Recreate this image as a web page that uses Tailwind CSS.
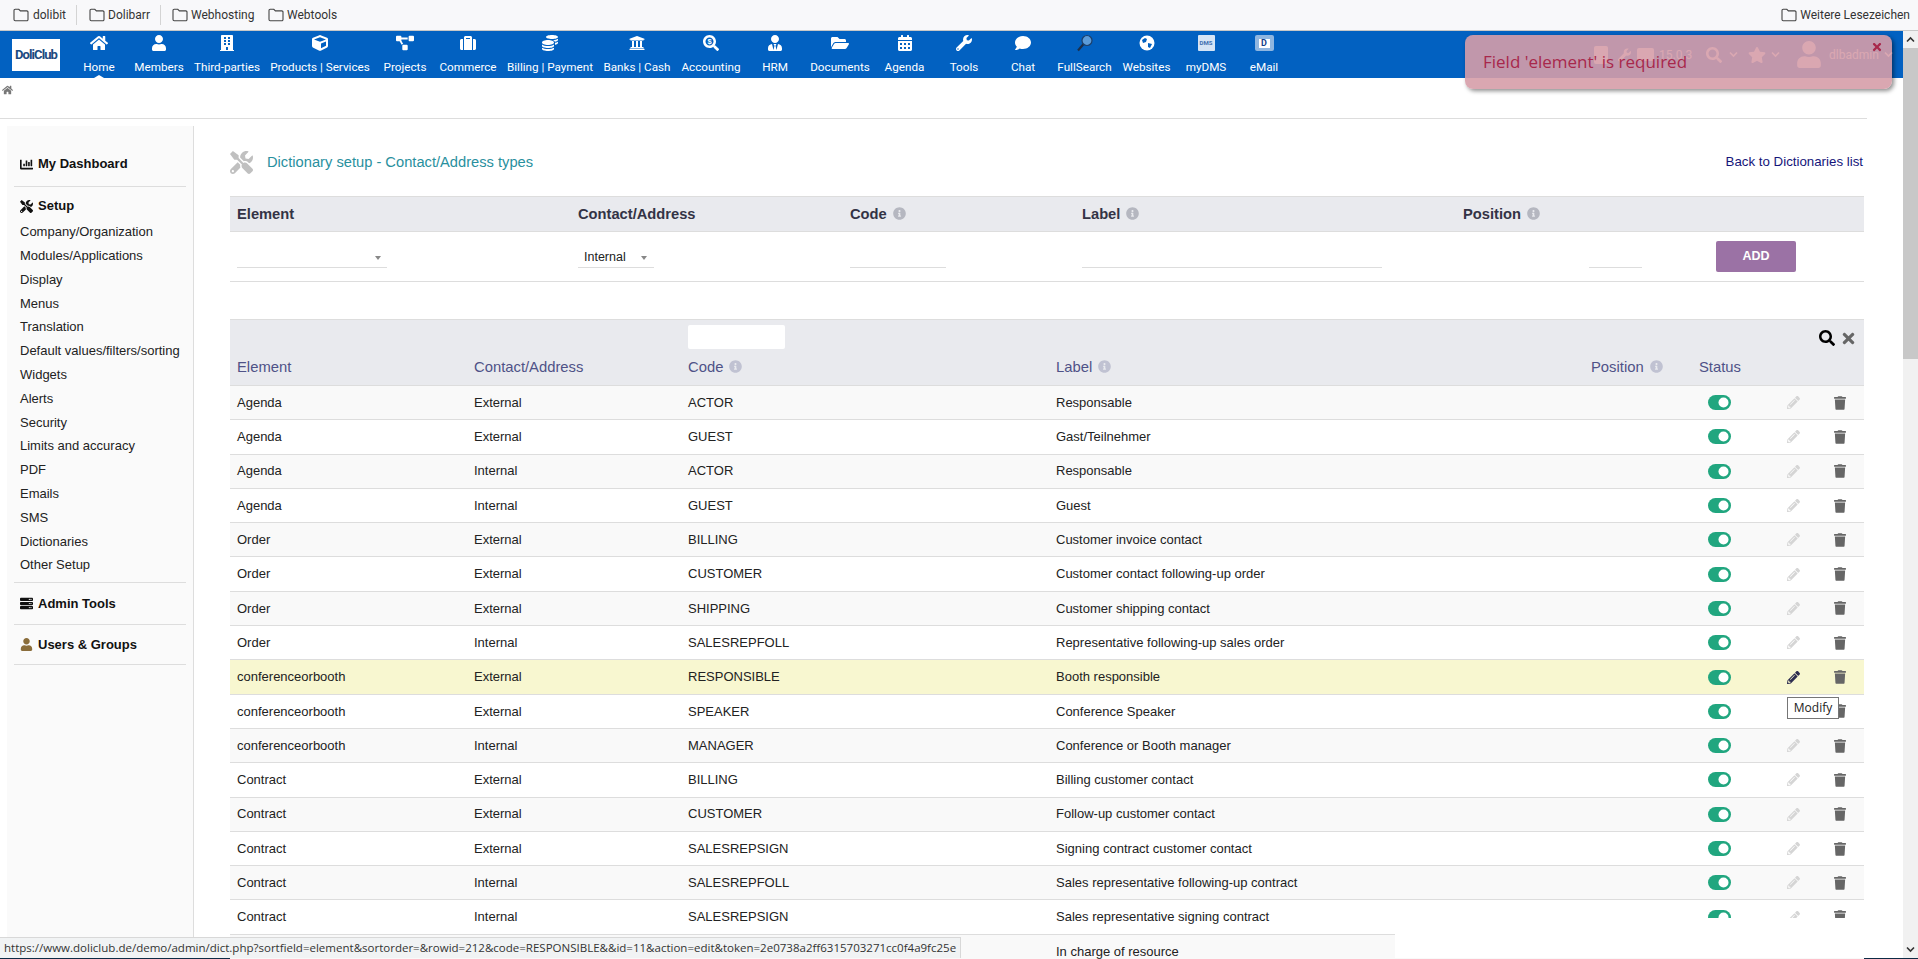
<!DOCTYPE html>
<html lang="en">
  <head>
    <meta charset="UTF-8" />
    <meta name="viewport" content="width=device-width, initial-scale=1.0" />
    <script src="https://cdn.jsdelivr.net/npm/@tailwindcss/browser@4"></script>
    <title>Dictionary setup</title>
  </head>
  <body class="relative w-[1918px] h-[959px] overflow-hidden bg-white font-['Liberation_Sans',Arial,sans-serif] text-[13px] text-[#222]">
    <!-- icon sprites -->
    <svg class="hidden">
      <defs>
        <symbol id="i-home" viewBox="0 0 576 512"><path d="M280.37 148.26L96 300.11V464a16 16 0 0 0 16 16l112.06-.29a16 16 0 0 0 15.92-16V368a16 16 0 0 1 16-16h64a16 16 0 0 1 16 16v95.64a16 16 0 0 0 16 16.05L464 480a16 16 0 0 0 16-16V300L295.67 148.26a12.19 12.19 0 0 0-15.3 0zM571.6 251.47L488 182.56V44.05a12 12 0 0 0-12-12h-56a12 12 0 0 0-12 12v72.61L318.47 43a48 48 0 0 0-61 0L4.34 251.47a12 12 0 0 0-1.6 16.9l25.5 31A12 12 0 0 0 45.15 301l235.22-193.74a12.19 12.19 0 0 1 15.3 0L530.9 301a12 12 0 0 0 16.9-1.6l25.5-31a12 12 0 0 0-1.7-16.93z"/></symbol>
        <symbol id="i-user" viewBox="0 0 448 512"><path d="M224 256c70.7 0 128-57.3 128-128S294.7 0 224 0 96 57.3 96 128s57.3 128 128 128zm89.6 32h-16.7c-22.2 10.2-46.9 16-72.9 16s-50.6-5.8-72.9-16h-16.7C60.2 288 0 348.2 0 422.4V464c0 26.5 21.5 48 48 48h352c26.5 0 48-21.5 48-48v-41.6c0-74.2-60.2-134.4-134.4-134.4z"/></symbol>
        <symbol id="i-trash" viewBox="0 0 448 512"><path d="M432 32H312l-9.4-18.7A24 24 0 0 0 281.1 0H166.8a23.72 23.72 0 0 0-21.4 13.3L136 32H16A16 16 0 0 0 0 48v32a16 16 0 0 0 16 16h416a16 16 0 0 0 16-16V48a16 16 0 0 0-16-16zM53.2 467a48 48 0 0 0 47.9 45h245.8a48 48 0 0 0 47.9-45L416 128H32z"/></symbol>
        <symbol id="i-pencil" viewBox="0 0 512 512"><path d="M497.9 142.1l-46.1 46.1c-4.7 4.7-12.3 4.7-17 0l-111-111c-4.7-4.7-4.7-12.3 0-17l46.1-46.1c18.7-18.7 49.1-18.7 67.9 0l60.1 60.1c18.8 18.7 18.8 49.1 0 67.9zM284.2 99.8L21.6 362.4.4 483.9c-2.9 16.4 11.4 30.6 27.8 27.8l121.5-21.3 262.6-262.6c4.7-4.7 4.7-12.3 0-17l-111-111c-4.8-4.7-12.4-4.7-17.1 0zM124.1 339.9c-5.5-5.5-5.5-14.3 0-19.8l154-154c5.5-5.5 14.3-5.5 19.8 0s5.5 14.3 0 19.8l-154 154c-5.5 5.5-14.3 5.5-19.8 0zM88 424h48v36.3l-64.5 11.3-31.1-31.1L51.7 376H88v48z"/></symbol>
        <symbol id="i-search" viewBox="0 0 512 512"><path d="M505 442.7L405.3 343c-4.5-4.5-10.6-7-17-7H372c27.6-35.3 44-79.7 44-128C416 93.1 322.9 0 208 0S0 93.1 0 208s93.1 208 208 208c48.3 0 92.7-16.4 128-44v16.3c0 6.4 2.5 12.5 7 17l99.7 99.7c9.4 9.4 24.6 9.4 33.9 0l28.3-28.3c9.4-9.4 9.4-24.6.1-34zM208 336c-70.7 0-128-57.2-128-128 0-70.7 57.2-128 128-128 70.7 0 128 57.2 128 128 0 70.7-57.2 128-128 128z"/></symbol>
        <symbol id="i-times" viewBox="0 0 352 512"><path d="M242.72 256l100.07-100.07c12.28-12.28 12.28-32.19 0-44.48l-22.24-22.24c-12.28-12.28-32.19-12.28-44.48 0L176 189.28 75.93 89.21c-12.28-12.28-32.19-12.28-44.48 0L9.21 111.45c-12.28 12.28-12.28 32.19 0 44.48L109.28 256 9.21 356.07c-12.28 12.28-12.28 32.19 0 44.48l22.24 22.24c12.28 12.28 32.2 12.28 44.48 0L176 322.72l100.07 100.07c12.28 12.28 32.2 12.28 44.48 0l22.24-22.24c12.28-12.28 12.28-32.19 0-44.48L242.72 256z"/></symbol>
        <symbol id="i-info" viewBox="0 0 512 512"><path d="M256 8C119.043 8 8 119.083 8 256c0 136.997 111.043 248 248 248s248-111.003 248-248C504 119.083 392.957 8 256 8zm0 110c23.196 0 42 18.804 42 42s-18.804 42-42 42-42-18.804-42-42 18.804-42 42-42zm56 254c0 6.627-5.373 12-12 12h-88c-6.627 0-12-5.373-12-12v-24c0-6.627 5.373-12 12-12h12v-64h-12c-6.627 0-12-5.373-12-12v-24c0-6.627 5.373-12 12-12h64c6.627 0 12 5.373 12 12v100h12c6.627 0 12 5.373 12 12v24z"/></symbol>
        <symbol id="i-tools" viewBox="0 0 512 512"><path d="M501.1 395.7L384 278.6c-23.1-23.1-57.6-27.6-85.4-13.9L192 158.1V96L64 0 0 64l96 128h62.1l106.6 106.6c-13.6 27.8-9.2 62.3 13.9 85.4l117.1 117.1c14.6 14.6 38.2 14.6 52.7 0l52.7-52.7c14.5-14.6 14.5-38.2 0-52.7zM331.7 225c28.3 0 54.9 11 74.9 31l19.4 19.4c15.8-6.9 30.8-16.5 43.8-29.5 37.1-37.1 49.7-89.3 37.9-136.7-2.2-9-13.5-12.1-20.1-5.5l-74.4 74.4-67.9-11.3L334 98.9l74.4-74.4c6.6-6.6 3.4-17.9-5.7-20.2-47.4-11.7-99.6.9-136.6 37.9-28.5 28.5-41.9 66.1-41.2 103.6l82.1 82.1c8.1-1.9 16.5-2.9 24.7-2.9zm-103.9 82l-56.7-56.7L18.7 402.8c-25 25-25 65.5 0 90.5s65.5 25 90.5 0l123.6-123.6c-7.6-19.9-9.9-41.6-5-62.7zM64 472c-13.2 0-24-10.8-24-24 0-13.3 10.7-24 24-24s24 10.7 24 24c0 13.2-10.7 24-24 24z"/></symbol>
        <symbol id="i-wrench" viewBox="0 0 512 512"><path d="M507.73 109.1c-2.24-9.03-13.54-12.09-20.12-5.51l-74.36 74.36-67.88-11.31-11.31-67.88 74.36-74.36c6.62-6.62 3.43-17.9-5.66-20.16-47.38-11.74-99.55.91-136.58 37.93-39.64 39.64-50.55 97.1-34.05 147.2L18.74 402.76c-24.99 24.99-24.99 65.51 0 90.5 24.99 24.99 65.51 24.99 90.5 0l213.21-213.21c50.12 16.71 107.47 5.68 147.37-34.22 37.07-37.07 49.7-89.32 37.91-136.73zM64 472c-13.25 0-24-10.75-24-24 0-13.26 10.75-24 24-24s24 10.74 24 24c0 13.25-10.75 24-24 24z"/></symbol>
        <symbol id="i-star" viewBox="0 0 576 512"><path d="M259.3 17.8L194 150.2 47.9 171.5c-26.2 3.8-36.7 36.1-17.7 54.6l105.7 103-25 145.5c-4.5 26.3 23.2 46 46.4 33.7L288 439.6l130.7 68.7c23.2 12.2 50.9-7.4 46.4-33.7l-25-145.5 105.7-103c19-18.5 8.5-50.8-17.7-54.6L382 150.2 316.7 17.8c-11.7-23.6-45.6-23.9-57.4 0z"/></symbol>
        <symbol id="i-chevron" viewBox="0 0 9 7"><path d="M1 1.5l3.5 3.5 3.5-3.5" fill="none" stroke="currentColor" stroke-width="1.6"/></symbol>
        <symbol id="i-folder" viewBox="0 0 16 14"><path d="M1 2.5a1.2 1.2 0 0 1 1.2-1.2h3.6l1.6 1.6h6.4a1.2 1.2 0 0 1 1.2 1.2v7.4a1.2 1.2 0 0 1-1.2 1.2H2.2A1.2 1.2 0 0 1 1 11.5z" fill="none" stroke="#444" stroke-width="1.1"/></symbol>
        <symbol id="i-toggle" viewBox="0 0 23 15"><rect width="23" height="15" rx="7.5" fill="#21a67f"/><circle cx="15.5" cy="7.5" r="5" fill="#fff"/></symbol>
      </defs>
    </svg>

    <!-- browser bookmarks bar -->
    <div class="flex items-center h-[31px] bg-[#f8f8fa] border-b border-[#c8c8c8] text-[12px] text-[#333] font-['Roboto',sans-serif]">
      <svg class="w-[16px] h-[14px] ml-[13px]"><use href="#i-folder" /></svg>
      <span class="ml-[4px] w-[43px]">dolibit</span>
      <span class="w-px h-[20px] bg-[#d4d4d4]"></span>
      <svg class="w-[16px] h-[14px] ml-[12px]"><use href="#i-folder" /></svg>
      <span class="ml-[3px] w-[52px]">Dolibarr</span>
      <span class="w-px h-[20px] bg-[#d4d4d4]"></span>
      <svg class="w-[16px] h-[14px] ml-[11px]"><use href="#i-folder" /></svg>
      <span class="ml-[3px] w-[77px]">Webhosting</span>
      <svg class="w-[16px] h-[14px]"><use href="#i-folder" /></svg>
      <span class="ml-[3px]">Webtools</span>
      <svg class="w-[16px] h-[14px] ml-auto"><use href="#i-folder" /></svg>
      <span class="ml-[3px] mr-[8px]">Weitere Lesezeichen</span>
    </div>

    <div class="flex h-[927px]">
      <div class="w-[1903px] flex flex-col">
        <!-- top menu -->
        <nav class="flex h-[47px] bg-[#0261c1] text-white font-['Roboto',sans-serif] text-[11.7px] shrink-0">
          <div class="w-[70px] flex items-center pl-[12px]">
            <div class="w-[48px] h-[32px] bg-white flex items-center justify-center text-[#1c4a80] font-bold text-[13px] tracking-[-0.9px] font-['Liberation_Sans_Narrow','Roboto',sans-serif]">DoliClub</div>
          </div>
          <a class="relative w-[58px] flex flex-col items-center pt-[4px]"><svg class="w-[18px] h-[16px] fill-white"><use href="#i-home" /></svg><span class="mt-[8px]">Home</span><span class="absolute bottom-0 border-x-[5px] border-x-transparent border-b-[3px] border-b-white"></span></a>
          <a class="w-[62px] flex flex-col items-center pt-[4px]"><svg class="w-[14px] h-[16px] fill-white"><use href="#i-user" /></svg><span class="mt-[8px]">Members</span></a>
          <a class="w-[74px] flex flex-col items-center pt-[4px]">
            <svg class="w-[14px] h-[16px] fill-white" viewBox="0 0 448 512"><path d="M436 480h-20V24c0-13.255-10.745-24-24-24H56C42.745 0 32 10.745 32 24v456H12c-6.627 0-12 5.373-12 12v20h448v-20c0-6.627-5.373-12-12-12zM128 76c0-6.627 5.373-12 12-12h40c6.627 0 12 5.373 12 12v40c0 6.627-5.373 12-12 12h-40c-6.627 0-12-5.373-12-12V76zm0 96c0-6.627 5.373-12 12-12h40c6.627 0 12 5.373 12 12v40c0 6.627-5.373 12-12 12h-40c-6.627 0-12-5.373-12-12v-40zm52 148h-40c-6.627 0-12-5.373-12-12v-40c0-6.627 5.373-12 12-12h40c6.627 0 12 5.373 12 12v40c0 6.627-5.373 12-12 12zm76 160h-64v-84c0-6.627 5.373-12 12-12h40c6.627 0 12 5.373 12 12v84zm64-172c0 6.627-5.373 12-12 12h-40c-6.627 0-12-5.373-12-12v-40c0-6.627 5.373-12 12-12h40c6.627 0 12 5.373 12 12v40zm0-96c0 6.627-5.373 12-12 12h-40c-6.627 0-12-5.373-12-12v-40c0-6.627 5.373-12 12-12h40c6.627 0 12 5.373 12 12v40zm0-96c0 6.627-5.373 12-12 12h-40c-6.627 0-12-5.373-12-12V76c0-6.627 5.373-12 12-12h40c6.627 0 12 5.373 12 12v40z"/></svg>
            <span class="mt-[8px]">Third-parties</span>
          </a>
          <a class="w-[112px] flex flex-col items-center pt-[4px]">
            <svg class="w-[16px] h-[16px] fill-white" viewBox="0 0 512 512"><path d="M239.1 6.3l-208 78c-18.7 7-31.1 25-31.1 45v225.1c0 18.2 10.3 34.8 26.5 42.9l208 104c13.5 6.8 29.4 6.8 42.9 0l208-104c16.3-8.1 26.5-24.8 26.5-42.9V129.3c0-20-12.4-37.9-31.1-44.9l-208-78C262 2.2 250 2.2 239.1 6.3zM256 68.4l192 72v1.1l-192 78-192-78v-1.1l192-72zm32 356V275.5l160-65v133.9l-160 80z"/></svg>
            <span class="mt-[8px]">Products | Services</span>
          </a>
          <a class="w-[58px] flex flex-col items-center pt-[4px]">
            <svg class="w-[18px] h-[16px] fill-white" viewBox="0 0 640 512"><path d="M384 320H256c-17.67 0-32 14.33-32 32v128c0 17.67 14.33 32 32 32h128c17.67 0 32-14.33 32-32V352c0-17.67-14.33-32-32-32zM192 32c0-17.67-14.33-32-32-32H32C14.33 0 0 14.33 0 32v128c0 17.67 14.33 32 32 32h95.72l73.16 128.04C211.98 300.98 232.4 288 256 288h.28L192 175.51V128h224V64H192V32zM608 0H480c-17.67 0-32 14.33-32 32v128c0 17.67 14.33 32 32 32h128c17.67 0 32-14.33 32-32V32c0-17.67-14.33-32-32-32z"/></svg>
            <span class="mt-[8px]">Projects</span>
          </a>
          <a class="w-[68px] flex flex-col items-center pt-[4px]">
            <svg class="w-[16px] h-[16px] fill-white" viewBox="0 0 512 512"><path d="M128 480h256V80c0-26.5-21.5-48-48-48H176c-26.5 0-48 21.5-48 48v400zm64-384h128v32H192V96zm320 80v256c0 26.5-21.5 48-48 48h-48V128h48c26.5 0 48 21.5 48 48zM96 480H48c-26.5 0-48-21.5-48-48V176c0-26.5 21.5-48 48-48h48v352z"/></svg>
            <span class="mt-[8px]">Commerce</span>
          </a>
          <a class="w-[96px] flex flex-col items-center pt-[4px]">
            <svg class="w-[16px] h-[16px] fill-white" viewBox="0 0 512 512"><path d="M0 405.3V448c0 35.3 86 64 192 64s192-28.7 192-64v-42.7C342.7 434.4 267.2 448 192 448S41.3 434.4 0 405.3zM320 128c106 0 192-28.7 192-64S426 0 320 0 128 28.7 128 64s86 64 192 64zM0 300.4V352c0 35.3 86 64 192 64s192-28.7 192-64v-51.6c-41.3 34-116.9 51.6-192 51.6S41.3 334.4 0 300.4zm416 11c57.3-11.1 96-31.7 96-55.4v-42.7c-23.2 16.4-57.3 27.6-96 34.5v63.6zM192 160C86 160 0 195.8 0 240s86 80 192 80 192-35.8 192-80-86-80-192-80zm219.3 56.3c60-10.8 100.7-32 100.7-56.3v-42.7c-35.5 25.1-96.5 38.6-160.7 41.8 29.5 14.3 51.2 33.5 60 57.2z"/></svg>
            <span class="mt-[8px]">Billing | Payment</span>
          </a>
          <a class="w-[78px] flex flex-col items-center pt-[4px]">
            <svg class="w-[16px] h-[16px] fill-white" viewBox="0 0 512 512"><path d="M496 128v16a8 8 0 0 1-8 8h-24v12c0 6.627-5.373 12-12 12H60c-6.627 0-12-5.373-12-12v-12H24a8 8 0 0 1-8-8v-16a8 8 0 0 1 4.941-7.392l232-88a7.996 7.996 0 0 1 6.118 0l232 88A8 8 0 0 1 496 128zm-24 304H40c-13.255 0-24 10.745-24 24v16a8 8 0 0 0 8 8h464a8 8 0 0 0 8-8v-16c0-13.255-10.745-24-24-24zM96 192v192H60c-6.627 0-12 5.373-12 12v20h416v-20c0-6.627-5.373-12-12-12h-36V192h-64v192h-64V192h-64v192h-64V192H96z"/></svg>
            <span class="mt-[8px]">Banks | Cash</span>
          </a>
          <a class="w-[70px] flex flex-col items-center pt-[4px]">
            <svg class="w-[16px] h-[16px] fill-white" viewBox="0 0 512 512"><use href="#i-search" /><text x="208" y="300" text-anchor="middle" font-size="240" font-weight="700" font-family="Liberation Sans">$</text></svg>
            <span class="mt-[8px]">Accounting</span>
          </a>
          <a class="w-[58px] flex flex-col items-center pt-[4px]">
            <svg class="w-[14px] h-[16px] fill-white" viewBox="0 0 448 512"><path d="M224 256c70.7 0 128-57.3 128-128S294.7 0 224 0 96 57.3 96 128s57.3 128 128 128zm95.8 32.6L272 480l-32-136 32-56h-96l32 56-32 136-47.8-191.4C56.9 292 0 350.3 0 422.4V464c0 26.5 21.5 48 48 48h352c26.5 0 48-21.5 48-48v-41.6c0-72.1-56.9-130.4-128.2-133.8z"/></svg>
            <span class="mt-[8px]">HRM</span>
          </a>
          <a class="w-[72px] flex flex-col items-center pt-[4px]">
            <svg class="w-[18px] h-[16px] fill-white" viewBox="0 0 576 512"><path d="M572.694 292.093L500.27 416.248A63.997 63.997 0 0 1 444.989 448H45.025c-18.523 0-30.064-20.093-20.731-36.093l72.424-124.155A64 64 0 0 1 152 256h399.964c18.523 0 30.064 20.093 20.73 36.093zM152 224h328v-48c0-26.51-21.49-48-48-48H272l-64-64H48C21.49 64 0 85.49 0 112v278.046l69.077-118.418C86.214 242.25 117.989 224 152 224z"/></svg>
            <span class="mt-[8px]">Documents</span>
          </a>
          <a class="w-[57px] flex flex-col items-center pt-[4px]">
            <svg class="w-[14px] h-[16px] fill-white" viewBox="0 0 448 512"><path d="M0 464c0 26.5 21.5 48 48 48h352c26.5 0 48-21.5 48-48V192H0v272zm320-196c0-6.6 5.4-12 12-12h40c6.6 0 12 5.4 12 12v40c0 6.6-5.4 12-12 12h-40c-6.6 0-12-5.4-12-12v-40zm0 128c0-6.6 5.4-12 12-12h40c6.6 0 12 5.4 12 12v40c0 6.6-5.4 12-12 12h-40c-6.6 0-12-5.4-12-12v-40zM192 268c0-6.6 5.4-12 12-12h40c6.6 0 12 5.4 12 12v40c0 6.6-5.4 12-12 12h-40c-6.6 0-12-5.4-12-12v-40zm0 128c0-6.6 5.4-12 12-12h40c6.6 0 12 5.4 12 12v40c0 6.6-5.4 12-12 12h-40c-6.6 0-12-5.4-12-12v-40zM64 268c0-6.6 5.4-12 12-12h40c6.6 0 12 5.4 12 12v40c0 6.6-5.4 12-12 12H76c-6.6 0-12-5.4-12-12v-40zm0 128c0-6.6 5.4-12 12-12h40c6.6 0 12 5.4 12 12v40c0 6.6-5.4 12-12 12H76c-6.6 0-12-5.4-12-12v-40zM400 64h-48V16c0-8.8-7.2-16-16-16h-32c-8.8 0-16 7.2-16 16v48H160V16c0-8.8-7.2-16-16-16h-32c-8.8 0-16 7.2-16 16v48H48C21.5 64 0 85.5 0 112v48h448v-48c0-26.5-21.5-48-48-48z"/></svg>
            <span class="mt-[8px]">Agenda</span>
          </a>
          <a class="w-[62px] flex flex-col items-center pt-[4px]"><svg class="w-[16px] h-[16px] fill-white"><use href="#i-wrench" /></svg><span class="mt-[8px]">Tools</span></a>
          <a class="w-[56px] flex flex-col items-center pt-[4px]">
            <svg class="w-[16px] h-[16px] fill-white" viewBox="0 0 512 512"><path d="M256 32C114.6 32 0 125.1 0 240c0 49.6 21.4 95 57 130.7C44.5 421.1 2.7 466 2.2 466.5c-2.2 2.3-2.8 5.7-1.5 8.7S4.8 480 8 480c66.3 0 116-31.8 140.6-51.4 32.7 12.3 69 19.4 107.4 19.4 141.4 0 256-93.1 256-208S397.4 32 256 32z"/></svg>
            <span class="mt-[8px]">Chat</span>
          </a>
          <a class="w-[67px] flex flex-col items-center pt-[4px]">
            <svg class="w-[18px] h-[18px] -mt-[1px] -mb-[1px]" viewBox="0 0 18 18"><line x1="2" y1="16.5" x2="8" y2="9.5" stroke="#1c2f4a" stroke-width="2.2" /><circle cx="11" cy="6.5" r="5" fill="#5b9bd8" stroke="#1c3f6a" stroke-width="1.2" /></svg>
            <span class="mt-[8px]">FullSearch</span>
          </a>
          <a class="w-[57px] flex flex-col items-center pt-[4px]">
            <svg class="w-[16px] h-[16px]" viewBox="0 0 16 16"><circle cx="8" cy="8" r="7.5" fill="#fff" /><path d="M3 5l3-2 2 1-1 3-3 1zM9 8l4 1-2 4-2-1z" fill="#0261c1" /></svg>
            <span class="mt-[8px]">Websites</span>
          </a>
          <a class="w-[62px] flex flex-col items-center pt-[4px]">
            <div class="w-[17px] h-[16px] bg-[#d5e4f5] rounded-[1px] flex items-center justify-center text-[6px] leading-none text-[#3d6fb0] font-bold">DMS</div>
            <span class="mt-[8px]">myDMS</span>
          </a>
          <a class="w-[54px] flex flex-col items-center pt-[4px]">
            <div class="w-[19px] h-[16px] bg-[#8fb6e0] rounded-[2px] flex items-center justify-center text-[9px] leading-none text-[#12408a] font-bold"><span class="bg-white w-[11px] text-center">D</span></div>
            <span class="mt-[8px]">eMail</span>
          </a>
          <!-- right side of the menu, mostly under the error message -->
          <div class="ml-auto flex items-center pr-[10px] text-[12px] text-white">
            <div class="w-[14px] h-[18px] bg-white rounded-[2px]"></div>
            <svg class="w-[13px] h-[14px] fill-white ml-[10px]"><use href="#i-wrench" /></svg>
            <div class="w-[17px] h-[13px] bg-white rounded-[2px] ml-[6px]"></div>
            <span class="ml-[5px] w-[30px]">15.0.3</span>
            <svg class="w-[16px] h-[16px] fill-white ml-[17px]"><use href="#i-search" /></svg>
            <svg class="w-[9px] h-[7px] ml-[7px]"><use href="#i-chevron" /></svg>
            <svg class="w-[18px] h-[16px] fill-white ml-[10px]"><use href="#i-star" /></svg>
            <svg class="w-[9px] h-[7px] ml-[5px]"><use href="#i-chevron" /></svg>
            <svg class="w-[24px] h-[27px] fill-white ml-[17px]"><use href="#i-user" /></svg>
            <span class="ml-[8px] w-[50px]">dlbadmin</span>
            <svg class="w-[9px] h-[7px] ml-[5px]"><use href="#i-chevron" /></svg>
          </div>
        </nav>

        <!-- breadcrumb strip -->
        <div class="h-[41px] shrink-0 mr-[36px] border-b border-[#ddd] pt-[7px] pl-[2px]">
          <svg class="w-[11px] h-[10px] fill-[#777]"><use href="#i-home" /></svg>
        </div>

        <div class="flex flex-1 min-h-0 pt-[7px]">
          <!-- left menu -->
          <aside class="w-[187px] ml-[7px] bg-[#fafafa] border-r border-[#ddd] shrink-0 px-[7px] pt-[28px] text-[#222]">
            <div class="flex items-center h-[20px] pl-[6px] font-bold text-[13px] text-[#111]"><svg class="w-[13px] h-[13px] mr-[5px] fill-[#111]" viewBox="0 0 512 512"><path d="M332.8 320h38.4c6.4 0 12.8-6.4 12.8-12.8V172.8c0-6.4-6.4-12.8-12.8-12.8h-38.4c-6.4 0-12.8 6.4-12.8 12.8v134.4c0 6.4 6.4 12.8 12.8 12.8zm96 0h38.4c6.4 0 12.8-6.4 12.8-12.8V76.8c0-6.4-6.4-12.8-12.8-12.8h-38.4c-6.4 0-12.8 6.4-12.8 12.8v230.4c0 6.4 6.4 12.8 12.8 12.8zm-288 0h38.4c6.4 0 12.8-6.4 12.8-12.8v-70.4c0-6.4-6.4-12.8-12.8-12.8h-38.4c-6.4 0-12.8 6.4-12.8 12.8v70.4c0 6.4 6.4 12.8 12.8 12.8zm96 0h38.4c6.4 0 12.8-6.4 12.8-12.8V108.8c0-6.4-6.4-12.8-12.8-12.8h-38.4c-6.4 0-12.8 6.4-12.8 12.8v198.4c0 6.4 6.4 12.8 12.8 12.8zM496 384H64V80c0-8.84-7.16-16-16-16H16C7.16 64 0 71.16 0 80v336c0 17.67 14.33 32 32 32h464c8.84 0 16-7.16 16-16v-32c0-8.84-7.16-16-16-16z"/></svg>My Dashboard</div>
            <div class="mt-[12px] border-b border-[#ddd]"></div>
            <div class="flex items-center h-[24px] mt-[7px] pl-[6px] font-bold text-[13px] text-[#111]"><svg class="w-[13px] h-[13px] mr-[5px] fill-[#111]"><use href="#i-tools" /></svg>Setup</div>
            <div class="pl-[6px] mt-[2px] [&>div]:h-[23.8px] [&>div]:flex [&>div]:items-center">
              <div>Company/Organization</div>
              <div>Modules/Applications</div>
              <div>Display</div>
              <div>Menus</div>
              <div>Translation</div>
              <div>Default values/filters/sorting</div>
              <div>Widgets</div>
              <div>Alerts</div>
              <div>Security</div>
              <div>Limits and accuracy</div>
              <div>PDF</div>
              <div>Emails</div>
              <div>SMS</div>
              <div>Dictionaries</div>
              <div>Other Setup</div>
            </div>
            <div class="mt-[5px] border-b border-[#ddd]"></div>
            <div class="flex items-center h-[20px] mt-[11px] pl-[6px] font-bold text-[13px] text-[#111]">
              <svg class="w-[13px] h-[13px] mr-[5px] fill-[#111]" viewBox="0 0 512 512"><path d="M480 160H32c-17.673 0-32-14.327-32-32V64c0-17.673 14.327-32 32-32h448c17.673 0 32 14.327 32 32v64c0 17.673-14.327 32-32 32zm-48-88c-13.255 0-24 10.745-24 24s10.745 24 24 24 24-10.745 24-24-10.745-24-24-24zm-64 0c-13.255 0-24 10.745-24 24s10.745 24 24 24 24-10.745 24-24-10.745-24-24-24zm112 248H32c-17.673 0-32-14.327-32-32v-64c0-17.673 14.327-32 32-32h448c17.673 0 32 14.327 32 32v64c0 17.673-14.327 32-32 32zm-48-88c-13.255 0-24 10.745-24 24s10.745 24 24 24 24-10.745 24-24-10.745-24-24-24zm-64 0c-13.255 0-24 10.745-24 24s10.745 24 24 24 24-10.745 24-24-10.745-24-24-24zm112 248H32c-17.673 0-32-14.327-32-32v-64c0-17.673 14.327-32 32-32h448c17.673 0 32 14.327 32 32v64c0 17.673-14.327 32-32 32zm-48-88c-13.255 0-24 10.745-24 24s10.745 24 24 24 24-10.745 24-24-10.745-24-24-24zm-64 0c-13.255 0-24 10.745-24 24s10.745 24 24 24 24-10.745 24-24-10.745-24-24-24z"/></svg>
              Admin Tools
            </div>
            <div class="mt-[10px] border-b border-[#ddd]"></div>
            <div class="flex items-center h-[20px] mt-[10px] pl-[6px] font-bold text-[13px] text-[#111]"><svg class="w-[13px] h-[13px] mr-[5px] fill-[#8a6d3b]"><use href="#i-user" /></svg>Users &amp; Groups</div>
            <div class="mt-[9px] border-b border-[#ddd]"></div>
          </aside>

          <!-- page content -->
          <main class="ml-[36px] w-[1634px] shrink-0">
            <div class="flex items-center h-[24px] mt-[24px]">
              <svg class="w-[23px] h-[23px] fill-[#c0c0c0]"><use href="#i-tools" /></svg>
              <h1 class="ml-[14px] text-[14.7px] text-[#29909e]">Dictionary setup - Contact/Address types</h1>
              <a class="ml-auto mr-[1px] text-[13.3px] text-[#15157a]">Back to Dictionaries list</a>
            </div>

            <!-- add form -->
            <div class="mt-[22px] grid grid-cols-[348px_272px_232px_381px_401px] h-[36px] items-center bg-[#e9eaee] border-y border-[#ddd] font-bold text-[14.7px] text-[#333345]">
              <div class="pl-[7px]">Element</div>
              <div>Contact/Address</div>
              <div class="flex items-center">Code<svg class="w-[13px] h-[13px] ml-[6px] fill-[#b5b7c0]"><use href="#i-info" /></svg></div>
              <div class="flex items-center">Label<svg class="w-[13px] h-[13px] ml-[6px] fill-[#b5b7c0]"><use href="#i-info" /></svg></div>
              <div class="flex items-center">Position<svg class="w-[13px] h-[13px] ml-[6px] fill-[#b5b7c0]"><use href="#i-info" /></svg></div>
            </div>
            <div class="relative grid grid-cols-[348px_272px_232px_507px_127px_148px] h-[50px] border-b border-[#ddd]">
              <div class="pl-[7px] pt-[17px]">
                <div class="relative w-[150px] h-[19px] border-b border-[#ddd]"><span class="absolute right-[6px] top-[7px] border-x-[3px] border-x-transparent border-t-[4px] border-t-[#888]"></span></div>
              </div>
              <div class="pt-[17px]">
                <div class="relative w-[76px] h-[19px] border-b border-[#ddd] pl-[6px] leading-[16px] text-[12.5px]">Internal<span class="absolute right-[7px] top-[7px] border-x-[3px] border-x-transparent border-t-[4px] border-t-[#888]"></span></div>
              </div>
              <div class="pt-[17px]"><div class="w-[96px] h-[19px] border-b border-[#ddd]"></div></div>
              <div class="pt-[17px]"><div class="w-[300px] h-[19px] border-b border-[#ddd]"></div></div>
              <div class="pt-[17px]"><div class="w-[53px] h-[19px] border-b border-[#ddd]"></div></div>
              <div class="pt-[9px]">
                <button class="w-[80px] h-[31px] rounded-[2px] bg-[#9b72a5] text-white font-bold text-[12.5px]">ADD</button>
              </div>
            </div>

            <!-- dictionary list -->
            <div class="mt-[37px] h-[67px] bg-[#e9eaee] border-y border-[#ddd] relative grid grid-cols-[244px_214px_368px_535px_108px_165px] items-end pb-[7px] text-[14.8px] text-[#4f5287]">
              <div class="pl-[7px]">Element</div>
              <div>Contact/Address</div>
              <div class="flex items-center">Code<svg class="w-[13px] h-[13px] ml-[6px] fill-[#c0c2d2]"><use href="#i-info" /></svg></div>
              <div class="flex items-center">Label<svg class="w-[13px] h-[13px] ml-[6px] fill-[#c0c2d2]"><use href="#i-info" /></svg></div>
              <div class="flex items-center">Position<svg class="w-[13px] h-[13px] ml-[6px] fill-[#c0c2d2]"><use href="#i-info" /></svg></div>
              <div>Status</div>
              <div class="absolute left-[458px] top-[5px] w-[97px] h-[24px] bg-white rounded-[2px]"></div>
              <svg class="absolute left-[1589px] top-[10px] w-[16px] h-[16px] fill-black"><use href="#i-search" /></svg>
              <svg class="absolute left-[1612px] top-[10px] w-[13px] h-[17px] fill-[#666]"><use href="#i-times" /></svg>
            </div>
            <div class="grid grid-cols-[244px_214px_368px_535px_108px_72px_44px_49px] auto-rows-[34.3px] text-[#222]">
              <div class="col-span-8 grid grid-cols-subgrid items-center border-b border-[#ddd] bg-[#f9f9f9]"><div class="pl-[7px]">Agenda</div><div>External</div><div>ACTOR</div><div>Responsable</div><div></div><svg class="w-[23px] h-[15px] ml-[9px]"><use href="#i-toggle" /></svg><svg class="w-[13px] h-[13px] mx-auto fill-[#d5d5d5]"><use href="#i-pencil" /></svg><svg class="w-[12px] h-[14px] mx-auto fill-[#666]"><use href="#i-trash" /></svg></div>
              <div class="col-span-8 grid grid-cols-subgrid items-center border-b border-[#ddd]"><div class="pl-[7px]">Agenda</div><div>External</div><div>GUEST</div><div>Gast/Teilnehmer</div><div></div><svg class="w-[23px] h-[15px] ml-[9px]"><use href="#i-toggle" /></svg><svg class="w-[13px] h-[13px] mx-auto fill-[#d5d5d5]"><use href="#i-pencil" /></svg><svg class="w-[12px] h-[14px] mx-auto fill-[#666]"><use href="#i-trash" /></svg></div>
              <div class="col-span-8 grid grid-cols-subgrid items-center border-b border-[#ddd] bg-[#f9f9f9]"><div class="pl-[7px]">Agenda</div><div>Internal</div><div>ACTOR</div><div>Responsable</div><div></div><svg class="w-[23px] h-[15px] ml-[9px]"><use href="#i-toggle" /></svg><svg class="w-[13px] h-[13px] mx-auto fill-[#d5d5d5]"><use href="#i-pencil" /></svg><svg class="w-[12px] h-[14px] mx-auto fill-[#666]"><use href="#i-trash" /></svg></div>
              <div class="col-span-8 grid grid-cols-subgrid items-center border-b border-[#ddd]"><div class="pl-[7px]">Agenda</div><div>Internal</div><div>GUEST</div><div>Guest</div><div></div><svg class="w-[23px] h-[15px] ml-[9px]"><use href="#i-toggle" /></svg><svg class="w-[13px] h-[13px] mx-auto fill-[#d5d5d5]"><use href="#i-pencil" /></svg><svg class="w-[12px] h-[14px] mx-auto fill-[#666]"><use href="#i-trash" /></svg></div>
              <div class="col-span-8 grid grid-cols-subgrid items-center border-b border-[#ddd] bg-[#f9f9f9]"><div class="pl-[7px]">Order</div><div>External</div><div>BILLING</div><div>Customer invoice contact</div><div></div><svg class="w-[23px] h-[15px] ml-[9px]"><use href="#i-toggle" /></svg><svg class="w-[13px] h-[13px] mx-auto fill-[#d5d5d5]"><use href="#i-pencil" /></svg><svg class="w-[12px] h-[14px] mx-auto fill-[#666]"><use href="#i-trash" /></svg></div>
              <div class="col-span-8 grid grid-cols-subgrid items-center border-b border-[#ddd]"><div class="pl-[7px]">Order</div><div>External</div><div>CUSTOMER</div><div>Customer contact following-up order</div><div></div><svg class="w-[23px] h-[15px] ml-[9px]"><use href="#i-toggle" /></svg><svg class="w-[13px] h-[13px] mx-auto fill-[#d5d5d5]"><use href="#i-pencil" /></svg><svg class="w-[12px] h-[14px] mx-auto fill-[#666]"><use href="#i-trash" /></svg></div>
              <div class="col-span-8 grid grid-cols-subgrid items-center border-b border-[#ddd] bg-[#f9f9f9]"><div class="pl-[7px]">Order</div><div>External</div><div>SHIPPING</div><div>Customer shipping contact</div><div></div><svg class="w-[23px] h-[15px] ml-[9px]"><use href="#i-toggle" /></svg><svg class="w-[13px] h-[13px] mx-auto fill-[#d5d5d5]"><use href="#i-pencil" /></svg><svg class="w-[12px] h-[14px] mx-auto fill-[#666]"><use href="#i-trash" /></svg></div>
              <div class="col-span-8 grid grid-cols-subgrid items-center border-b border-[#ddd]"><div class="pl-[7px]">Order</div><div>Internal</div><div>SALESREPFOLL</div><div>Representative following-up sales order</div><div></div><svg class="w-[23px] h-[15px] ml-[9px]"><use href="#i-toggle" /></svg><svg class="w-[13px] h-[13px] mx-auto fill-[#d5d5d5]"><use href="#i-pencil" /></svg><svg class="w-[12px] h-[14px] mx-auto fill-[#666]"><use href="#i-trash" /></svg></div>
              <div class="col-span-8 grid grid-cols-subgrid items-center border-b border-[#ddd] bg-[#f8f7d0]"><div class="pl-[7px]">conferenceorbooth</div><div>External</div><div>RESPONSIBLE</div><div>Booth responsible</div><div></div><svg class="w-[23px] h-[15px] ml-[9px]"><use href="#i-toggle" /></svg><svg class="w-[13px] h-[13px] mx-auto fill-[#2d2d50]"><use href="#i-pencil" /></svg><svg class="w-[12px] h-[14px] mx-auto fill-[#666]"><use href="#i-trash" /></svg></div>
              <div class="col-span-8 grid grid-cols-subgrid items-center border-b border-[#ddd]"><div class="pl-[7px]">conferenceorbooth</div><div>External</div><div>SPEAKER</div><div>Conference Speaker</div><div></div><svg class="w-[23px] h-[15px] ml-[9px]"><use href="#i-toggle" /></svg><svg class="w-[13px] h-[13px] mx-auto fill-[#d5d5d5]"><use href="#i-pencil" /></svg><svg class="w-[12px] h-[14px] mx-auto fill-[#666]"><use href="#i-trash" /></svg></div>
              <div class="col-span-8 grid grid-cols-subgrid items-center border-b border-[#ddd] bg-[#f9f9f9]"><div class="pl-[7px]">conferenceorbooth</div><div>Internal</div><div>MANAGER</div><div>Conference or Booth manager</div><div></div><svg class="w-[23px] h-[15px] ml-[9px]"><use href="#i-toggle" /></svg><svg class="w-[13px] h-[13px] mx-auto fill-[#d5d5d5]"><use href="#i-pencil" /></svg><svg class="w-[12px] h-[14px] mx-auto fill-[#666]"><use href="#i-trash" /></svg></div>
              <div class="col-span-8 grid grid-cols-subgrid items-center border-b border-[#ddd]"><div class="pl-[7px]">Contract</div><div>External</div><div>BILLING</div><div>Billing customer contact</div><div></div><svg class="w-[23px] h-[15px] ml-[9px]"><use href="#i-toggle" /></svg><svg class="w-[13px] h-[13px] mx-auto fill-[#d5d5d5]"><use href="#i-pencil" /></svg><svg class="w-[12px] h-[14px] mx-auto fill-[#666]"><use href="#i-trash" /></svg></div>
              <div class="col-span-8 grid grid-cols-subgrid items-center border-b border-[#ddd] bg-[#f9f9f9]"><div class="pl-[7px]">Contract</div><div>External</div><div>CUSTOMER</div><div>Follow-up customer contact</div><div></div><svg class="w-[23px] h-[15px] ml-[9px]"><use href="#i-toggle" /></svg><svg class="w-[13px] h-[13px] mx-auto fill-[#d5d5d5]"><use href="#i-pencil" /></svg><svg class="w-[12px] h-[14px] mx-auto fill-[#666]"><use href="#i-trash" /></svg></div>
              <div class="col-span-8 grid grid-cols-subgrid items-center border-b border-[#ddd]"><div class="pl-[7px]">Contract</div><div>External</div><div>SALESREPSIGN</div><div>Signing contract customer contact</div><div></div><svg class="w-[23px] h-[15px] ml-[9px]"><use href="#i-toggle" /></svg><svg class="w-[13px] h-[13px] mx-auto fill-[#d5d5d5]"><use href="#i-pencil" /></svg><svg class="w-[12px] h-[14px] mx-auto fill-[#666]"><use href="#i-trash" /></svg></div>
              <div class="col-span-8 grid grid-cols-subgrid items-center border-b border-[#ddd] bg-[#f9f9f9]"><div class="pl-[7px]">Contract</div><div>Internal</div><div>SALESREPFOLL</div><div>Sales representative following-up contract</div><div></div><svg class="w-[23px] h-[15px] ml-[9px]"><use href="#i-toggle" /></svg><svg class="w-[13px] h-[13px] mx-auto fill-[#d5d5d5]"><use href="#i-pencil" /></svg><svg class="w-[12px] h-[14px] mx-auto fill-[#666]"><use href="#i-trash" /></svg></div>
              <div class="col-span-8 grid grid-cols-subgrid items-center border-b border-[#ddd]"><div class="pl-[7px]">Contract</div><div>Internal</div><div>SALESREPSIGN</div><div>Sales representative signing contract</div><div></div><svg class="w-[23px] h-[15px] ml-[9px]"><use href="#i-toggle" /></svg><svg class="w-[13px] h-[13px] mx-auto fill-[#d5d5d5]"><use href="#i-pencil" /></svg><svg class="w-[12px] h-[14px] mx-auto fill-[#666]"><use href="#i-trash" /></svg></div>
              <div class="col-span-8 grid grid-cols-subgrid items-center border-b border-[#ddd] bg-[#f9f9f9]"><div></div><div></div><div></div><div>In charge of resource</div></div>
            </div>
          </main>
        </div>
      </div>

      <!-- page scrollbar -->
      <div class="relative w-[15px] bg-[#f1f1f1]">
        <div class="h-[311px] bg-[#c8c8c8] mt-[17px]"></div>
        <svg class="absolute top-[5px] left-[3px] w-[9px] h-[7px] fill-none stroke-[#333] stroke-[1.6]" viewBox="0 0 9 7"><path d="M1 5.5l3.5-3.5 3.5 3.5" /></svg>
        <svg class="absolute bottom-[5px] left-[3px] w-[9px] h-[7px] text-[#333]"><use href="#i-chevron" /></svg>
      </div>
    </div>
    <div class="h-px bg-[#0d2b45]"></div>

    <!-- patch where the list was not repainted -->
    <div class="absolute left-[1395px] top-[918px] w-[508px] h-[40px] bg-white"></div>

    <!-- hover tooltip -->
    <div class="absolute left-[1787px] top-[697px] w-[52px] h-[22px] bg-white border border-[#767676] flex items-center justify-center text-[12px] text-[#222] font-['Open_Sans',sans-serif]">Modify</div>

    <!-- browser link status -->
    <div class="absolute left-0 top-[937px] w-[961px] h-[21px] bg-[#f1f3f4] border-t border-r border-[#d8d8d8] flex items-center pl-[4px] text-[11.53px] text-[#333] whitespace-nowrap font-['Open_Sans',sans-serif]">https://www.doliclub.de/demo/admin/dict.php?sortfield=element&amp;sortorder=&amp;rowid=212&amp;code=RESPONSIBLE&amp;&amp;id=11&amp;action=edit&amp;token=2e0738a2ff6315703271cc0f4a9fc25e</div>

    <!-- error message -->
    <div class="absolute left-[1465px] top-[35px] w-[427px] h-[54px] rounded-[8px] bg-[#d69da9]/90 shadow-[2px_2px_4px_rgba(0,0,0,0.45)] flex items-center pl-[18px] text-[17px] text-[#a8284b] font-['Open_Sans',sans-serif]">
      Field 'element' is required
      <svg class="absolute right-[10px] top-[6px] w-[10px] h-[12px] fill-[#a8284b]"><use href="#i-times" /></svg>
    </div>
  </body>
</html>
